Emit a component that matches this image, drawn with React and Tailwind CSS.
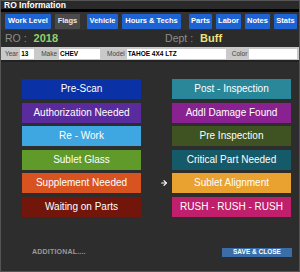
import { ArrowRight } from "lucide-react";

const TABS = [
  { label: "Work Level", w: "w-[46px]" },
  { label: "Flags", w: "w-[25px]", active: true },
  { label: "Vehicle", w: "w-[31px] ml-[3px]" },
  { label: "Hours & Techs", w: "w-[59px]" },
  { label: "Parts", w: "w-[23px] ml-[4px]" },
  { label: "Labor", w: "w-[25px]" },
  { label: "Notes", w: "w-[25px]" },
  { label: "Stats", w: "w-[23px]" },
];

const LEFT = [
  { label: "Pre-Scan", cls: "bg-[#0b31a6]" },
  { label: "Authorization Needed", cls: "bg-[#5a2b9c]" },
  { label: "Re - Work", cls: "bg-[#3ea7e2]" },
  { label: "Sublet Glass", cls: "bg-[#5f9a2b]" },
  { label: "Supplement Needed", cls: "bg-[#d8531f]" },
  { label: "Waiting on Parts", cls: "bg-[#72160b]" },
];

const RIGHT = [
  { label: "Post - Inspection", cls: "bg-[#2a8799]" },
  { label: "Addl Damage Found", cls: "bg-[#8a2190]" },
  { label: "Pre Inspection", cls: "bg-[#3f5322]" },
  { label: "Critical Part Needed", cls: "bg-[#145a69]" },
  { label: "Sublet Alignment", cls: "bg-[#e9a12f]", current: true },
  { label: "RUSH - RUSH - RUSH", cls: "bg-[#c01f6b]" },
];

function FlagButton({ label, cls }) {
  return (
    <button
      type="button"
      className={`flex h-[20px] w-[119px] items-center justify-center text-[10px] leading-none text-white ${cls}`}
    >
      {label}
    </button>
  );
}

export default function App() {
  return (
    <div className="flex h-[272px] w-[300px] flex-col overflow-hidden border border-[#555] bg-[#2d2d2d] font-['Liberation_Sans',Arial,sans-serif]">
      {/* title */}
      <div className="h-[8px] bg-[#2a2a2a] pl-[3px] text-[8.5px] font-bold leading-[8px] text-white">
        RO Information
      </div>
      <div className="h-[3px] bg-black" />

      {/* tabs */}
      <div className="flex h-[18px] items-center gap-[4px] bg-[#323232] pl-[4px]">
        {TABS.map((t) => (
          <div
            key={t.label}
            className={`flex h-[15px] items-center justify-center rounded-[1px] text-[7.5px] font-bold ${t.w} ${
              t.active ? "bg-[#4a4a4a] text-[#e8e8e8]" : "bg-[#1d63d4] text-white"
            }`}
          >
            {t.label}
          </div>
        ))}
      </div>

      {/* RO row */}
      <div className="flex h-[17px] items-center bg-[#2b2b2b] pl-[4px] text-[10.5px]">
        <span className="text-[#8d8d8d]">RO :</span>
        <span className="ml-[7px] text-[11px] font-bold text-[#8fd36b]">2018</span>
        <span className="ml-[107px] text-[#8d8d8d]">Dept :</span>
        <span className="ml-[7px] text-[11px] font-bold text-[#ece27a]">Buff</span>
      </div>

      {/* vehicle row */}
      <div className="flex h-[15px] items-center gap-[2px] border-b-2 border-[#222] bg-[#c9c9c9] pl-[4px] text-[6.5px] text-[#444]">
        <span>Year</span>
        <span className="h-[10px] w-[14px] bg-white pl-[1px] font-bold leading-[10px] text-black">13</span>
        <span className="ml-[5px]">Make</span>
        <span className="h-[10px] w-[41px] bg-white pl-[1px] font-bold leading-[10px] text-black">CHEV</span>
        <span className="ml-[5px]">Model</span>
        <span className="h-[10px] w-[99px] bg-white pl-[1px] font-bold leading-[10px] text-black">TAHOE 4X4 LTZ</span>
        <span className="ml-[4px]">Color</span>
        <span className="h-[10px] w-[48px] bg-white" />
      </div>

      {/* flags */}
      <div className="mt-[17px] flex gap-[31px] pl-[21px]">
        <div className="flex flex-col gap-[3.6px]">
          {LEFT.map((b) => (
            <FlagButton key={b.label} {...b} />
          ))}
        </div>
        <div className="flex flex-col gap-[3.6px]">
          {RIGHT.map((b) => (
            <div key={b.label} className="relative">
              {b.current && (
                <ArrowRight
                  className="absolute left-[-12px] top-[6px] text-white"
                  size={8}
                  strokeWidth={3.5}
                />
              )}
              <FlagButton {...b} />
            </div>
          ))}
        </div>
      </div>

      {/* footer */}
      <div className="mt-[30px] flex items-center pl-[31px] pr-[7px]">
        <span className="text-[7px] font-bold tracking-[0.2px] text-[#9a9a9a]">ADDITIONAL....</span>
        <button
          type="button"
          className="ml-auto flex h-[9px] w-[70px] items-center justify-center bg-[#3b6ea9] text-[6.5px] font-bold text-white"
        >
          SAVE &amp; CLOSE
        </button>
      </div>
    </div>
  );
}
